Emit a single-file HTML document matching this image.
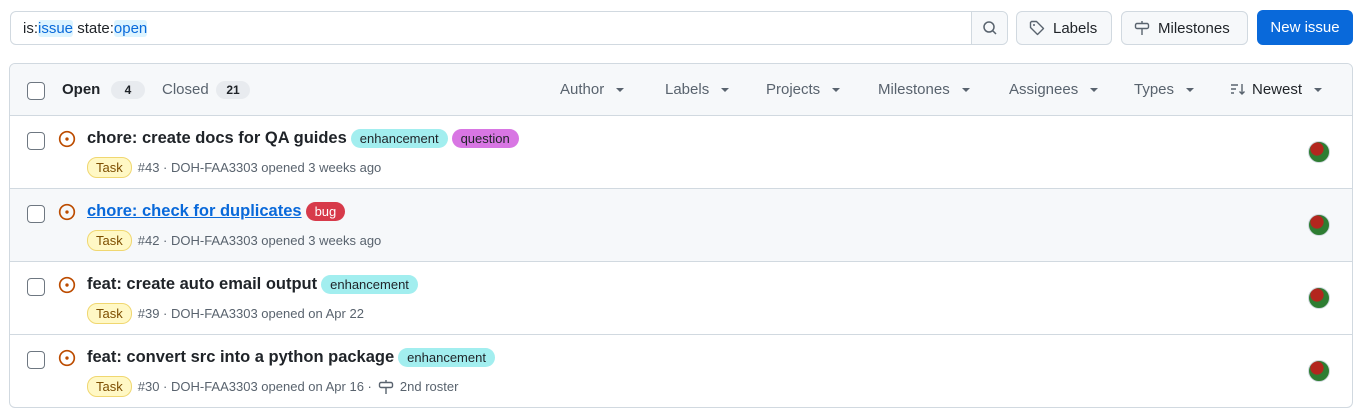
<!DOCTYPE html>
<html><head><meta charset="utf-8"><style>
*{box-sizing:border-box;margin:0;padding:0}
body{width:1364px;height:420px;background:#fff;font-family:"Liberation Sans",sans-serif;color:#1f2328;font-size:14px;position:relative;overflow:hidden}
.abs{position:absolute}
.search{left:10px;top:11px;width:998px;height:34px;border:1px solid #d1d9e0;border-radius:6px;background:#fff}
.search .q{position:absolute;left:12px;top:8px;font-size:15px}
.hl{background:#ddf4ff;color:#0969da;border-radius:3px}
.sbtn{position:absolute;right:0;top:0;width:36px;height:32px;border-left:1px solid #d1d9e0;background:#f6f8fa;border-radius:0 6px 6px 0}
.btn{position:absolute;top:11px;height:34px;border:1px solid #d1d9e0;border-radius:6px;background:#f6f8fa;font-size:15px;display:flex;align-items:center;padding-left:12px;gap:8px}
.new{position:absolute;left:1257px;top:10px;width:96px;height:35px;background:#0969da;color:#fff;border-radius:6px;font-size:15px;display:flex;align-items:center;justify-content:center}
.box{left:9px;top:63px;width:1344px;height:345px;border:1px solid #d1d9e0;border-radius:6px;overflow:hidden}
.head{height:52px;background:#f6f8fa;border-bottom:1px solid #d1d9e0;position:relative}
.cb{position:absolute;width:18px;height:18px;border:1.5px solid #6e7781;border-radius:4px;background:#fff}
.cnt{display:inline-block;background:#e8ebef;border-radius:10px;padding:2px 0;width:34px;text-align:center;font-size:12px;font-weight:bold;color:#1f2328}
.filt{position:absolute;top:17px;color:#59636e;font-size:15px}
.caret{display:inline-block;width:0;height:0;border-left:4px solid transparent;border-right:4px solid transparent;border-top:4px solid #59636e;margin-left:12px;vertical-align:middle}
.row{height:73px;border-bottom:1px solid #d1d9e0;position:relative}
.row:last-child{border-bottom:none}
.title{position:absolute;left:77px;top:13px;font-size:16.5px;font-weight:bold;white-space:nowrap;display:flex;align-items:center;gap:4px}
.lbl{font-size:13px;font-weight:normal;border-radius:10px;padding:1px 9px;line-height:17px;color:#1f2328}
.meta{position:absolute;left:77px;top:41px;font-size:13px;color:#59636e;display:flex;align-items:center;gap:6px}
.task{background:#fff8c5;border:1px solid #f0d770;color:#7d4e00;border-radius:10px;padding:2px 8px;font-size:13px}
.av{position:absolute;left:1298px;top:25px;width:22px;height:22px;border-radius:50%;background:radial-gradient(circle at 40% 35%,#b3261e 0 35%,#2e7d32 40%);border:1px solid #d1d9e0}
</style></head><body>
<div class="abs search"><span class="q">is:<span class="hl">issue</span> state:<span class="hl">open</span></span>
<div class="sbtn"><svg width="16" height="16" viewBox="0 0 16 16" style="position:absolute;left:10px;top:8px"><circle cx="7" cy="7" r="5" fill="none" stroke="#59636e" stroke-width="1.5"/><path d="M10.5 10.5L14 14" stroke="#59636e" stroke-width="1.5"/></svg></div></div>
<div class="btn" style="left:1016px;width:96px"><svg width="16" height="16" viewBox="0 0 16 16"><path d="M1.5 2.5v5l7 7 6-6-7-7h-5z" fill="none" stroke="#59636e" stroke-width="1.4" stroke-linejoin="round"/><circle cx="5" cy="5" r="1" fill="#59636e"/></svg>Labels</div>
<div class="btn" style="left:1121px;width:127px"><svg width="16" height="16" viewBox="0 0 16 16"><rect x="1.5" y="3.5" width="13" height="5" rx="1.5" fill="none" stroke="#59636e" stroke-width="1.4"/><path d="M8 1v2.5M8 8.5V15" stroke="#59636e" stroke-width="1.4"/></svg>Milestones</div>
<div class="new">New issue</div>
<div class="abs box">
<div class="head">
<div class="cb" style="left:17px;top:18px"></div>
<span class="abs" style="left:52px;top:17px;font-weight:bold;font-size:15px">Open</span><span class="abs cnt" style="left:101px;top:17px">4</span>
<span class="abs" style="left:152px;top:17px;color:#59636e;font-size:15px">Closed</span><span class="abs cnt" style="left:206px;top:17px">21</span>
<span class="filt" style="left:550px">Author<i class="caret"></i></span>
<span class="filt" style="left:655px">Labels<i class="caret"></i></span>
<span class="filt" style="left:756px">Projects<i class="caret"></i></span>
<span class="filt" style="left:868px">Milestones<i class="caret"></i></span>
<span class="filt" style="left:999px">Assignees<i class="caret"></i></span>
<span class="filt" style="left:1124px">Types<i class="caret"></i></span>
<span class="filt" style="left:1220px;color:#1f2328"><svg width="16" height="14" viewBox="0 0 16 14" style="vertical-align:-2px;margin-right:6px"><path d="M1 3h7M1 7h5M1 11h3M12 2v10M9.5 9.5L12 12l2.5-2.5" stroke="#59636e" stroke-width="1.4" fill="none"/></svg>Newest<i class="caret"></i></span>
</div>
<div class="row"><div class="cb" style="left:17px;top:16px"></div><svg class="abs" style="left:48px;top:14px" width="18" height="18" viewBox="0 0 16 16"><circle cx="8" cy="8" r="6.5" fill="none" stroke="#bc4c00" stroke-width="1.5"/><circle cx="8" cy="8" r="1.5" fill="#bc4c00"/></svg>
<div class="title">chore: create docs for QA guides <span class="lbl" style="background:#a2eeef">enhancement</span><span class="lbl" style="background:#d876e3">question</span></div>
<div class="meta"><span class="task">Task</span>#43 · DOH-FAA3303 opened 3 weeks ago</div><div class="av"></div></div>
<div class="row" style="background:#f6f8fa"><div class="cb" style="left:17px;top:16px"></div><svg class="abs" style="left:48px;top:14px" width="18" height="18" viewBox="0 0 16 16"><circle cx="8" cy="8" r="6.5" fill="none" stroke="#bc4c00" stroke-width="1.5"/><circle cx="8" cy="8" r="1.5" fill="#bc4c00"/></svg>
<div class="title"><span style="color:#0969da;text-decoration:underline">chore: check for duplicates</span> <span class="lbl" style="background:#d73a4a;color:#fff">bug</span></div>
<div class="meta"><span class="task">Task</span>#42 · DOH-FAA3303 opened 3 weeks ago</div><div class="av"></div></div>
<div class="row"><div class="cb" style="left:17px;top:16px"></div><svg class="abs" style="left:48px;top:14px" width="18" height="18" viewBox="0 0 16 16"><circle cx="8" cy="8" r="6.5" fill="none" stroke="#bc4c00" stroke-width="1.5"/><circle cx="8" cy="8" r="1.5" fill="#bc4c00"/></svg>
<div class="title">feat: create auto email output <span class="lbl" style="background:#a2eeef">enhancement</span></div>
<div class="meta"><span class="task">Task</span>#39 · DOH-FAA3303 opened on Apr 22</div><div class="av"></div></div>
<div class="row"><div class="cb" style="left:17px;top:16px"></div><svg class="abs" style="left:48px;top:14px" width="18" height="18" viewBox="0 0 16 16"><circle cx="8" cy="8" r="6.5" fill="none" stroke="#bc4c00" stroke-width="1.5"/><circle cx="8" cy="8" r="1.5" fill="#bc4c00"/></svg>
<div class="title">feat: convert src into a python package <span class="lbl" style="background:#a2eeef">enhancement</span></div>
<div class="meta"><span class="task">Task</span>#30 · DOH-FAA3303 opened on Apr 16 · <svg width="16" height="16" viewBox="0 0 16 16"><rect x="1.5" y="3.5" width="13" height="5" rx="1.5" fill="none" stroke="#59636e" stroke-width="1.4"/><path d="M8 1v2.5M8 8.5V15" stroke="#59636e" stroke-width="1.4"/></svg>2nd roster</div><div class="av"></div></div>
</div>
</body></html>
